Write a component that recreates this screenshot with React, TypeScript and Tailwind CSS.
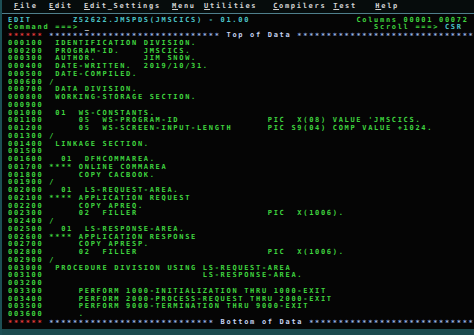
// ISPF edit screen (3270 terminal)
const G = 'text-[#3fd43f]';
const C = 'text-[#4cc4c8]';
const R = 'text-[#e23a3a]';
const B = 'text-[#9bb4e4]';
const T = 'text-[#c4d2f0]';

const pad = (s: string, n: number) => s.padEnd(n, ' ');

const codeLines: [string, string][] = [
  ['000100', ' IDENTIFICATION DIVISION.'],
  ['000200', ' PROGRAM-ID.    JMSCICS.'],
  ['000300', ' AUTHOR.        JIM SNOW.'],
  ['000400', ' DATE-WRITTEN.  2019/10/31.'],
  ['000500', ' DATE-COMPILED.'],
  ['000600', '/'],
  ['000700', ' DATA DIVISION.'],
  ['000800', ' WORKING-STORAGE SECTION.'],
  ['000900', ''],
  ['001000', ' 01  WS-CONSTANTS.'],
  ['001100', pad('     05  WS-PROGRAM-ID', 37) + "PIC  X(08) VALUE 'JMSCICS."],
  ['001200', pad('     05  WS-SCREEN-INPUT-LENGTH', 37) + 'PIC S9(04) COMP VALUE +1024.'],
  ['001300', '/'],
  ['001400', ' LINKAGE SECTION.'],
  ['001500', ''],
  ['001600', '  01  DFHCOMMAREA.'],
  ['001700', '**** ONLINE COMMAREA'],
  ['001800', '     COPY CACBOOK.'],
  ['001900', '/'],
  ['002000', '  01  LS-REQUEST-AREA.'],
  ['002100', '**** APPLICATION REQUEST'],
  ['002200', '     COPY APREQ.'],
  ['002300', pad('     02  FILLER', 37) + 'PIC  X(1006).'],
  ['002400', '/'],
  ['002500', '  01  LS-RESPONSE-AREA.'],
  ['002600', '**** APPLICATION RESPONSE'],
  ['002700', '     COPY APRESP.'],
  ['002800', pad('     02  FILLER', 37) + 'PIC  X(1006).'],
  ['002900', '/'],
  ['003000', ' PROCEDURE DIVISION USING LS-REQUEST-AREA'],
  ['003100', pad('', 26) + 'LS-RESPONSE-AREA.'],
  ['003200', ''],
  ['003300', '     PERFORM 1000-INITIALIZATION THRU 1000-EXIT'],
  ['003400', '     PERFORM 2000-PROCESS-REQUEST THRU 2000-EXIT'],
  ['003500', '     PERFORM 9000-TERMINATION THRU 9000-EXIT'],
  ['003600', '     .'],
];

const menu: { label: string; ml: string }[] = [
  { label: 'File', ml: 'ml-[12px]' },
  { label: 'Edit', ml: 'ml-[11.4px]' },
  { label: 'Edit_Settings', ml: 'ml-[11.4px]' },
  { label: 'Menu', ml: 'ml-[11.3px]' },
  { label: 'Utilities', ml: 'ml-[8.4px]' },
  { label: 'Compilers', ml: 'ml-[15.9px]' },
  { label: 'Test', ml: 'ml-[7px]' },
  { label: 'Help', ml: 'ml-[18.4px]' },
];

const row = 'h-[7.75px] leading-[7.75px] whitespace-pre';

function Stars({ n, cls }: { n: number; cls: string }) {
  return <span className={`${cls} align-[-1px]`}>{'*'.repeat(n)}</span>;
}

export default function App() {
  return (
    <div
      className="w-[474px] h-[335px] bg-[#050505] border-l-2 border-[#1d4f55] overflow-hidden flex flex-col text-[7px] font-bold tracking-[1.69px]"
      style={{ fontFamily: '"DejaVu Sans Mono", monospace' }}
    >
      {/* action bar */}
      <div className="h-[13px] flex items-center text-[#d4d4d4] bg-[#060c0c] whitespace-pre">
        {menu.map((m) => (
          <span key={m.label} className={m.ml}>
            <span className="underline underline-offset-[1px]">{m.label[0]}</span>
            {m.label.slice(1)}
          </span>
        ))}
      </div>
      <div className="h-px bg-[#4f7f8c]" />

      <div className="mt-[2.6px] pl-[6px]">
        <div className={`${row} ${C}`}>
          {'EDIT       '}
          {pad('Z52622.JMSPDS(JMSCICS) - 01.00', 48)}
          <span className={G}>Columns 00001 00072</span>
        </div>
        <div className={`${row} ${G}`}>
          {'Command ===> '}
          <span className="text-[#e8e8e8]">_</span>
          {pad('', 48)}
          {'Scroll ===> '}
          <span className={C}>CSR</span>
        </div>
        <div className={row}>
          <Stars n={6} cls={R} />
          {' '}
          <Stars n={29} cls={B} />
          <span className={T}>{' Top of Data '}</span>
          <Stars n={30} cls={B} />
        </div>
        {codeLines.map(([num, data]) => (
          <div key={num} className={`${row} ${G}`}>
            {num} {data}
          </div>
        ))}
        <div className={row}>
          <Stars n={6} cls={R} />
          {' '}
          <Stars n={28} cls={B} />
          <span className={T}>{' Bottom of Data '}</span>
          <Stars n={28} cls={B} />
        </div>
      </div>

      <div className="flex-1" />
      <div className="h-[6px] bg-[#1b4a4e]" />
    </div>
  );
}
